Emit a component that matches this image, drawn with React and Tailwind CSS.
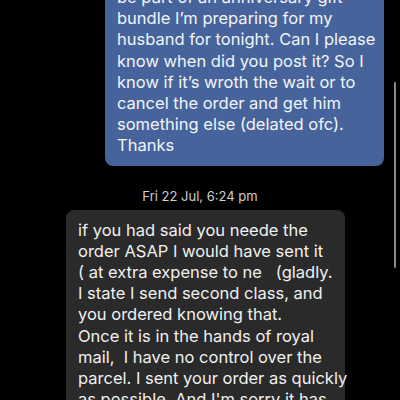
import React from "react";

const sent = [
  "be part of an anniversary gift",
  "bundle I’m preparing for my",
  "husband for tonight. Can I please",
  "know when did you post it? So I",
  "know if it’s wroth the wait or to",
  "cancel the order and get him",
  "something else (delated ofc).",
  "Thanks",
];

const received = [
  "if you had said you neede the",
  "order ASAP I would have sent it",
  "( at extra expense to ne   (gladly.",
  "I state I send second class, and",
  "you ordered knowing that.",
  "Once it is in the hands of royal",
  "mail,  I have no control over the",
  "parcel. I sent your order as quickly",
  "as possible. And I'm sorry it has",
  "not arrived in time.",
];

export default function App() {
  return (
    <div className="relative h-[400px] w-[400px] overflow-hidden bg-black font-['Inter',sans-serif] text-white">
      <div className="-mt-[17px] flex flex-col">
        <div className="flex justify-end pr-4">
          <div className="w-[279px] rounded-lg bg-[#46649b] px-3 pt-[4px] pb-[9px] text-[16.5px] leading-[21.2px] text-[#f2f4f8]">
            {sent.map((l, i) => (
              <div key={i} className="whitespace-pre">{l}</div>
            ))}
          </div>
        </div>

        <div className="mt-[21px] text-center text-[13px] leading-[18px] text-[#cfcfcf]">
          Fri 22 Jul, 6:24 pm
        </div>

        <div className="mt-[5px] pl-[66px]">
          <div className="w-[279px] rounded-lg bg-[#2a2a2a] px-3 pt-[10px] pb-3 text-[16.5px] leading-[21.2px] text-[#f0f0f0]">
            {received.map((l, i) => (
              <div key={i} className="whitespace-pre">{l}</div>
            ))}
          </div>
        </div>
      </div>

      <div className="absolute right-[4px] top-[82px] h-[186px] w-[2px] rounded-full bg-[#8a8a8a]" />
    </div>
  );
}
